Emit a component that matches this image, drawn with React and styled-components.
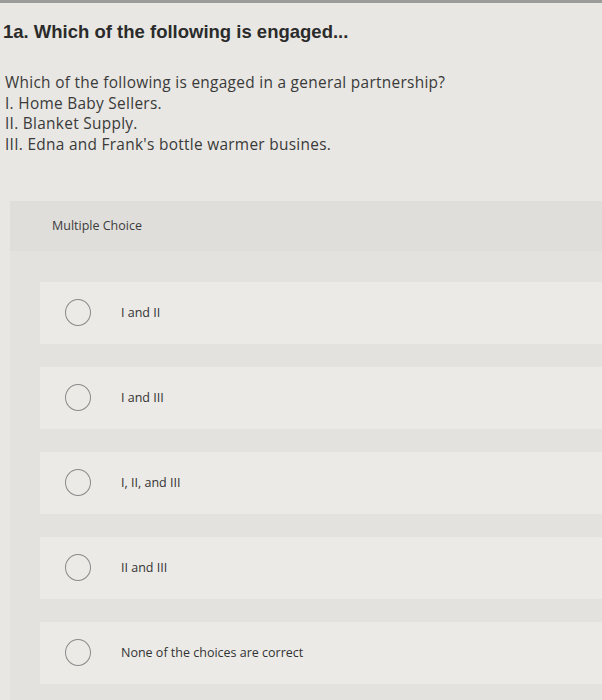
import React from "react";
import styled, { createGlobalStyle } from "styled-components";

const Global = createGlobalStyle`
  body {
    margin: 0;
    background: #e7e6e2;
    font-family: "Liberation Sans", Arial, sans-serif;
  }
`;

const Page = styled.div`
  width: 602px;
  height: 700px;
  overflow: hidden;
  background: #e8e7e3;
  border-top: 3px solid #9c9c9a;
  box-sizing: border-box;
`;

const Title = styled.h1`
  margin: 0;
  padding: 18px 0 0 3px;
  font-size: 18.5px;
  font-weight: bold;
  color: #2b2b2b;
  line-height: 22px;
`;

const Prompt = styled.div`
  margin-top: 30px;
  padding-left: 5px;
  font-family: "Open Sans", "Liberation Sans", sans-serif;
  font-size: 15.4px;
  letter-spacing: 0.3px;
  line-height: 20.7px;
  color: #3a3a3a;
`;

const Panel = styled.div`
  margin: 45px 0 0 10px;
  background: #e3e2de;
  padding-bottom: 20px;
`;

const PanelHead = styled.div`
  height: 50px;
  display: flex;
  align-items: center;
  padding-left: 42px;
  font-family: "Open Sans", "Liberation Sans", sans-serif;
  font-size: 12.5px;
  color: #3c3c3c;
  background: #dfdedb;
`;

const Options = styled.div`
  display: flex;
  flex-direction: column;
  gap: 23px;
  padding: 31px 0 0 30px;
`;

const Option = styled.label`
  height: 62px;
  display: flex;
  align-items: center;
  padding-left: 25px;
  background: #ebeae6;
  font-family: "Open Sans", "Liberation Sans", sans-serif;
  font-size: 12.5px;
  color: #333;
`;

const Radio = styled.span`
  width: 24px;
  height: 25px;
  border: 1.5px solid #8a8a8c;
  border-radius: 50%;
  flex-shrink: 0;
  margin-right: 30px;
`;

const choices = ["I and II", "I and III", "I, II, and III", "II and III", "None of the choices are correct"];

export default function App() {
  return (
    <Page>
      <Global />
      <Title>1a. Which of the following is engaged...</Title>
      <Prompt>
        <div>Which of the following is engaged in a general partnership?</div>
        <div>I. Home Baby Sellers.</div>
        <div>II. Blanket Supply.</div>
        <div>III. Edna and Frank's bottle warmer busines.</div>
      </Prompt>
      <Panel>
        <PanelHead>Multiple Choice</PanelHead>
        <Options>
          {choices.map((c) => (
            <Option key={c}>
              <Radio />
              {c}
            </Option>
          ))}
        </Options>
      </Panel>
    </Page>
  );
}
